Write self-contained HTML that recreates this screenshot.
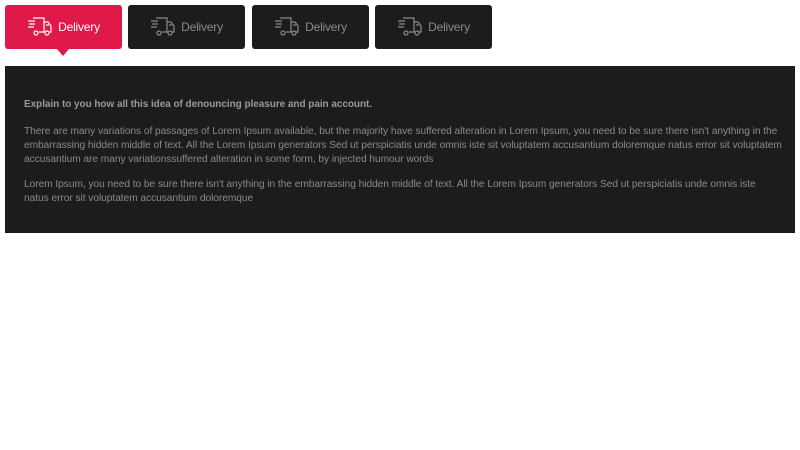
<!DOCTYPE html>
<html><head><style>
body{margin:0;background:#fff;font-family:"Liberation Sans",sans-serif;width:800px;height:450px;position:relative;overflow:hidden}
.tab{position:absolute;top:5px;width:117px;height:44px;border-radius:3px;background:#1c1c1c;color:#8a8a8a;font-size:12px;letter-spacing:-0.2px;display:flex;align-items:center;justify-content:center}
.tab svg{margin-right:5px}
.tab.a{background:#e0194b;color:#fff}
.tab.a:after{content:"";position:absolute;left:52px;top:44px;border-left:6px solid transparent;border-right:6px solid transparent;border-top:7px solid #e0194b}
.panel{position:absolute;left:5px;top:66px;width:790px;height:167px;background:#1c1c1c;color:#8a8a8a;font-size:10.2px;letter-spacing:-0.05px;line-height:14px;box-sizing:border-box;padding:32px 12px 0 19px}
.panel p{margin:0 0 11px}
.panel b{display:block;margin-bottom:13px;color:#999;font-size:10px}
</style></head><body>
<div class="tab a" style="left:5px"><svg width="26" height="22" viewBox="0 0 26 22" fill="none" stroke="currentColor" stroke-width="1.2"><path d="M6 2h11v14H12M17 6h4l3 4v6h-2"/><path d="M1 5h7M2 8h6M1 11h6"/><circle cx="9" cy="17" r="2"/><circle cx="20" cy="17" r="2"/><path d="M19 9h3"/></svg>Delivery</div>
<div class="tab" style="left:128px"><svg width="26" height="22" viewBox="0 0 26 22" fill="none" stroke="currentColor" stroke-width="1.2"><path d="M6 2h11v14H12M17 6h4l3 4v6h-2"/><path d="M1 5h7M2 8h6M1 11h6"/><circle cx="9" cy="17" r="2"/><circle cx="20" cy="17" r="2"/><path d="M19 9h3"/></svg>Delivery</div>
<div class="tab" style="left:252px"><svg width="26" height="22" viewBox="0 0 26 22" fill="none" stroke="currentColor" stroke-width="1.2"><path d="M6 2h11v14H12M17 6h4l3 4v6h-2"/><path d="M1 5h7M2 8h6M1 11h6"/><circle cx="9" cy="17" r="2"/><circle cx="20" cy="17" r="2"/><path d="M19 9h3"/></svg>Delivery</div>
<div class="tab" style="left:375px"><svg width="26" height="22" viewBox="0 0 26 22" fill="none" stroke="currentColor" stroke-width="1.2"><path d="M6 2h11v14H12M17 6h4l3 4v6h-2"/><path d="M1 5h7M2 8h6M1 11h6"/><circle cx="9" cy="17" r="2"/><circle cx="20" cy="17" r="2"/><path d="M19 9h3"/></svg>Delivery</div>
<div class="panel">
<b>Explain to you how all this idea of denouncing pleasure and pain account.</b>
<p>There are many variations of passages of Lorem Ipsum available, but the majority have suffered alteration in Lorem Ipsum, you need to be sure there isn't anything in the embarrassing hidden middle of text. All the Lorem Ipsum generators Sed ut perspiciatis unde omnis iste sit voluptatem accusantium doloremque natus error sit voluptatem accusantium are many variationssuffered alteration in some form, by injected humour words</p>
<p>Lorem Ipsum, you need to be sure there isn't anything in the embarrassing hidden middle of text. All the Lorem Ipsum generators Sed ut perspiciatis unde omnis iste natus error sit voluptatem accusantium doloremque</p>
</div>
</body></html>
